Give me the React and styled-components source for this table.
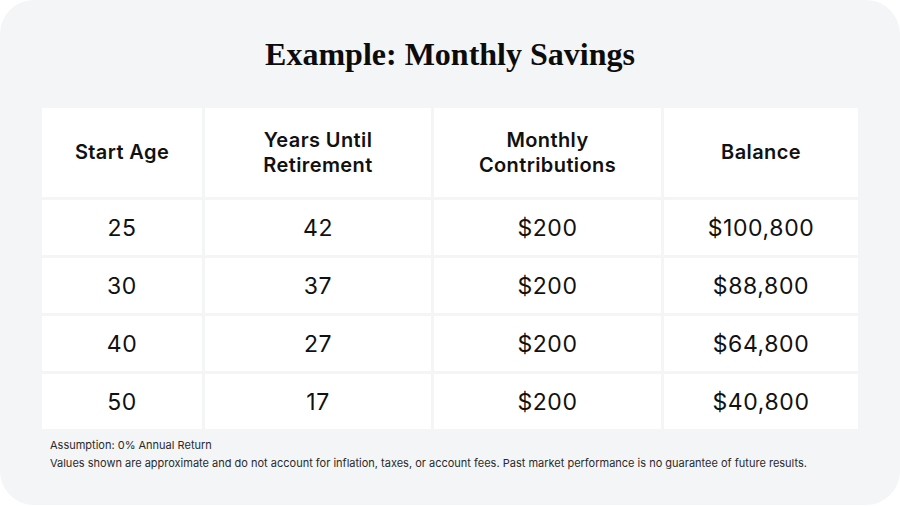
import React from "react";
import styled, { createGlobalStyle } from "styled-components";

const GlobalStyle = createGlobalStyle`
  html, body {
    margin: 0;
    padding: 0;
    background: #ffffff;
  }
`;

const Card = styled.div`
  box-sizing: border-box;
  width: 900px;
  height: 505px;
  background: #f4f5f7;
  border-radius: 34px;
  padding: 34px 42px 0;
  font-family: "Inter", "Noto Sans", sans-serif;
  color: #111111;
`;

const Title = styled.h1`
  margin: 0 0 34px;
  text-align: center;
  font-family: "Liberation Serif", "DejaVu Serif", serif;
  font-weight: 700;
  font-size: 32px;
  line-height: 40px;
  letter-spacing: 0;
  color: #0c0c0c;
`;

const Table = styled.div`
  display: grid;
  grid-template-columns: 160px 226px 227px 194px;
  grid-template-rows: 89px repeat(4, 55px);
  gap: 3px;
`;

const Cell = styled.div`
  background: #ffffff;
  display: flex;
  align-items: center;
  justify-content: center;
  text-align: center;
  white-space: pre-line;
  font-size: ${(p) => (p.$head ? "20px" : "23px")};
  font-weight: ${(p) => (p.$head ? 600 : 400)};
  line-height: ${(p) => (p.$head ? "25px" : "28px")};
  letter-spacing: ${(p) => (p.$head ? "0.4px" : "0.6px")};
  color: #111111;
`;

const Notes = styled.div`
  padding: 7px 0 0 8px;
  font-size: 11px;
  line-height: 18px;
  color: #2a2a2a;
`;

const headers = ["Start Age", "Years Until\nRetirement", "Monthly\nContributions", "Balance"];

const rows = [
  ["25", "42", "$200", "$100,800"],
  ["30", "37", "$200", "$88,800"],
  ["40", "27", "$200", "$64,800"],
  ["50", "17", "$200", "$40,800"],
];

const App = () => {
  return (
    <>
      <GlobalStyle />
      <Card>
        <Title>Example: Monthly Savings</Title>
        <Table>
          {headers.map((h) => (
            <Cell $head key={h}>
              {h}
            </Cell>
          ))}
          {rows.map((row, i) =>
            row.map((v, j) => <Cell key={i + "-" + j}>{v}</Cell>)
          )}
        </Table>
        <Notes>
          <div>Assumption: 0% Annual Return</div>
          <div>
            Values shown are approximate and do not account for inflation, taxes, or account fees. Past
            market performance is no guarantee of future results.
          </div>
        </Notes>
      </Card>
    </>
  );
};

export default App;
